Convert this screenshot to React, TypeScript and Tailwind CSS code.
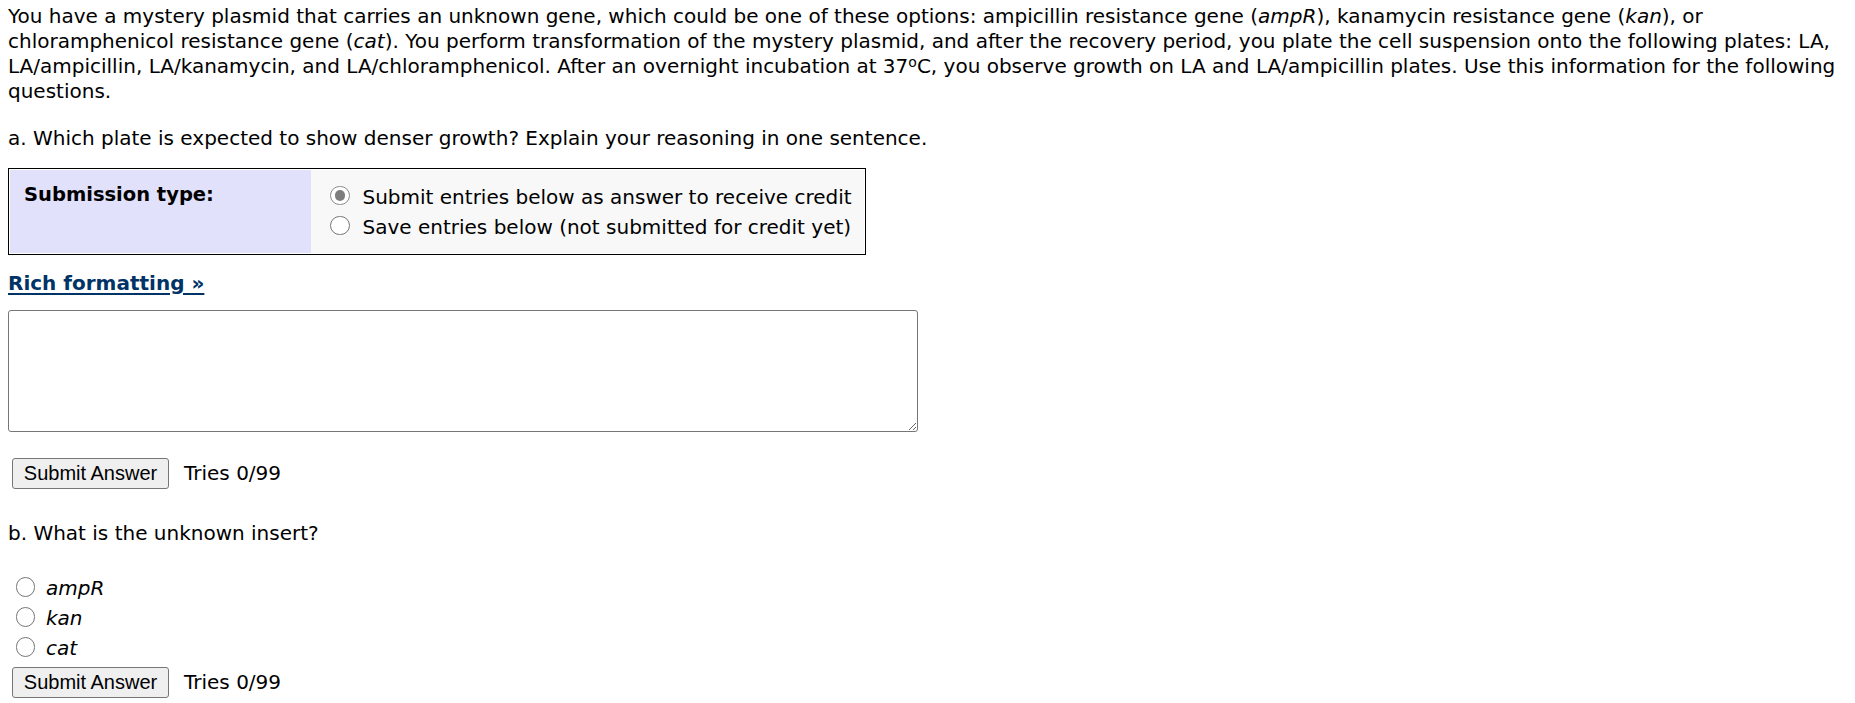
import React from "react"

function Radio({ checked = false }: { checked?: boolean }) {
  return (
    <span
      className={
        checked
          ? "flex size-[19.5px] shrink-0 items-center justify-center rounded-full border-[1.5px] border-[#8a8a8a] bg-white"
          : "flex size-[19.5px] shrink-0 items-center justify-center rounded-full border-[1.5px] border-[#767676] bg-white"
      }
    >
      {checked && <span className="size-[10.5px] rounded-full bg-[#7d7d7d]" />}
    </span>
  )
}

function SubmitRow() {
  return (
    <div className="flex h-[31px] items-center">
      <button
        type="button"
        className="ml-[4px] flex h-[31px] w-[157px] items-center justify-center rounded-[3px] border border-[#767676] bg-[#efefef] font-['Liberation_Sans',Arial,sans-serif] text-[20px] leading-none text-black"
      >
        Submit Answer
      </button>
      <span className="ml-[15px]">Tries 0/99</span>
    </div>
  )
}

const choices = ["ampR", "kan", "cat"]

export default function App() {
  return (
    <div className="min-h-screen bg-white px-[8px] pt-[3.5px] font-['DejaVu_Sans',Verdana,sans-serif] text-[20px] leading-[25px] text-black">
      <p className="whitespace-nowrap">
        You have a mystery plasmid that carries an unknown gene, which could be one of these options: ampicillin
        resistance gene (<i>ampR</i>), kanamycin resistance gene (<i>kan</i>), or
        <br />
        chloramphenicol resistance gene (<i>cat</i>). You perform transformation of the mystery plasmid, and after the
        recovery period, you plate the cell suspension onto the following plates: LA,
        <br />
        LA/ampicillin, LA/kanamycin, and LA/chloramphenicol. After an overnight incubation at 37
        <span className="align-[6px] text-[14px] leading-none">o</span>C, you observe growth on LA and LA/ampicillin
        plates. Use this information for the following
        <br />
        questions.
      </p>

      <p className="mt-[22px]">a. Which plate is expected to show denser growth? Explain your reasoning in one sentence.</p>

      <div className="mt-[17px] flex h-[87px] w-[858px] border border-black p-[1px]">
        <div className="w-[301px] bg-[#e1e1fb] pl-[14px] pt-[12.5px] text-[19.5px] font-bold">Submission type:</div>
        <div className="flex-1 bg-[#f8f8f8] pl-[19px] pt-[13px]">
          <label className="flex h-[30px] items-center">
            <span className="mb-[4px]">
              <Radio checked />
            </span>
            <span className="ml-[13px]">Submit entries below as answer to receive credit</span>
          </label>
          <label className="flex h-[30px] items-center">
            <span className="mb-[4px]">
              <Radio />
            </span>
            <span className="ml-[13px]">Save entries below (not submitted for credit yet)</span>
          </label>
        </div>
      </div>

      <a
        href="#"
        className="mt-[16px] block w-fit font-bold text-[#003366] underline decoration-[1.5px] underline-offset-[3px]"
      >
        Rich formatting »
      </a>

      <textarea className="mt-[14px] block h-[122px] w-[910px] resize rounded-[3px] border border-[#767676] bg-white" />

      <div className="mt-[26px]">
        <SubmitRow />
      </div>

      <p className="mt-[32px]">b. What is the unknown insert?</p>

      <div className="mt-[28px]">
        {choices.map((c) => (
          <label key={c} className="flex h-[30px] items-center">
            <span className="mb-[3px] ml-[7.5px]">
              <Radio />
            </span>
            <i className="ml-[11px]">{c}</i>
          </label>
        ))}
      </div>

      <div className="mt-[3px]">
        <SubmitRow />
      </div>
    </div>
  )
}
